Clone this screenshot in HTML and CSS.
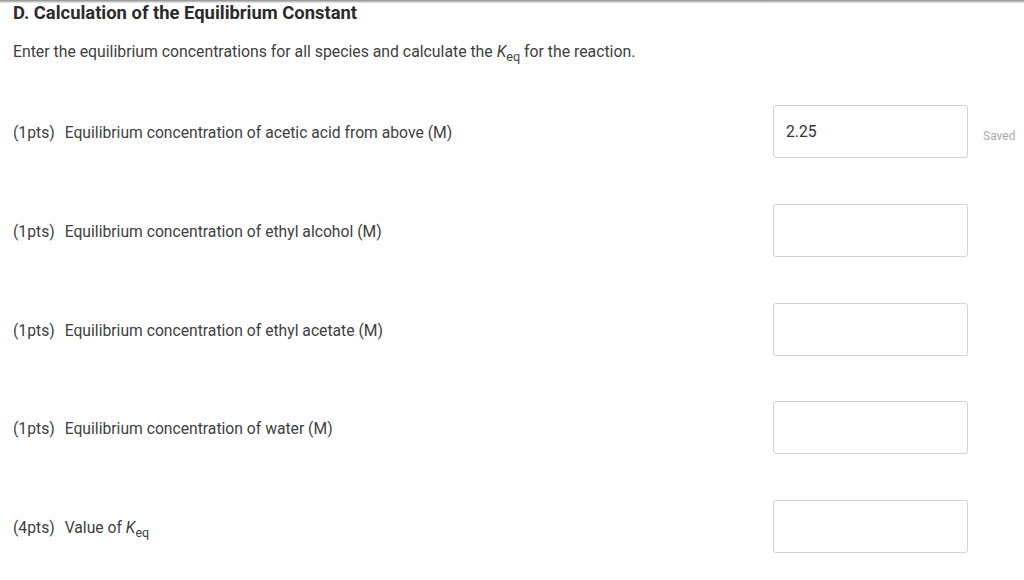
FILE: index.html
```html
<!DOCTYPE html>
<html>
<head>
<meta charset="utf-8">
<link rel="stylesheet" href="styles.css">
</head>
<body>
<div class="topline"></div>
<div class="page">
  <h2 class="title">D. Calculation of the Equilibrium Constant</h2>
  <p class="intro">Enter the equilibrium concentrations for all species and calculate the <span class="k"><i>K</i><sub>eq</sub></span> for the reaction.</p>
  <div class="rows">
    <div class="row">
      <div class="label"><span class="pts">(1pts)</span>Equilibrium concentration of acetic acid from above (M)</div>
      <div class="field">2.25</div>
      <div class="status">Saved</div>
    </div>
    <div class="row">
      <div class="label"><span class="pts">(1pts)</span>Equilibrium concentration of ethyl alcohol (M)</div>
      <div class="field"></div>
      <div class="status"></div>
    </div>
    <div class="row">
      <div class="label"><span class="pts">(1pts)</span>Equilibrium concentration of ethyl acetate (M)</div>
      <div class="field"></div>
      <div class="status"></div>
    </div>
    <div class="row">
      <div class="label"><span class="pts">(1pts)</span>Equilibrium concentration of water (M)</div>
      <div class="field"></div>
      <div class="status"></div>
    </div>
    <div class="row">
      <div class="label"><span class="pts">(4pts)</span>Value of <span class="k"><i>K</i><sub>eq</sub></span></div>
      <div class="field"></div>
      <div class="status"></div>
    </div>
  </div>
</div>
</body>
</html>
```
FILE: styles.css
```css
html, body {
  margin: 0;
  padding: 0;
  background: #fff;
}
body {
  font-family: Roboto, "Liberation Sans", sans-serif;
  color: #333;
}
.topline {
  height: 3px;
  background: linear-gradient(#8a8a8a, #c8c8c8 60%, #f0f0f0);
}
.page {
  padding: 0 0 0 13px;
}
.title {
  margin: 0;
  font-size: 18.4px;
  font-weight: 700;
  line-height: 20px;
  color: #2b2b2b;
}
.intro {
  margin: 20px 0 0 0;
  font-size: 15.8px;
  line-height: 18px;
  color: #404040;
}
.k i {
  font-style: italic;
}
.k sub {
  font-size: 0.8em;
  vertical-align: -4px;
  line-height: 0;
}
.rows {
  margin-top: 44px;
  display: flex;
  flex-direction: column;
  gap: 45.75px;
}
.row {
  display: flex;
  align-items: center;
  height: 53px;
}
.label {
  width: 760px;
  padding-top: 2px;
  font-size: 15.7px;
  color: #404040;
}
.pts {
  margin-right: 10px;
}
.field {
  box-sizing: border-box;
  width: 195px;
  height: 53px;
  border: 1px solid #d2d2d2;
  border-radius: 3px;
  padding: 0 12px;
  display: flex;
  align-items: center;
  font-size: 15.7px;
  color: #333;
}
.status {
  margin-left: 15px;
  padding-top: 8px;
  font-size: 12px;
  color: #aaa;
}
```
